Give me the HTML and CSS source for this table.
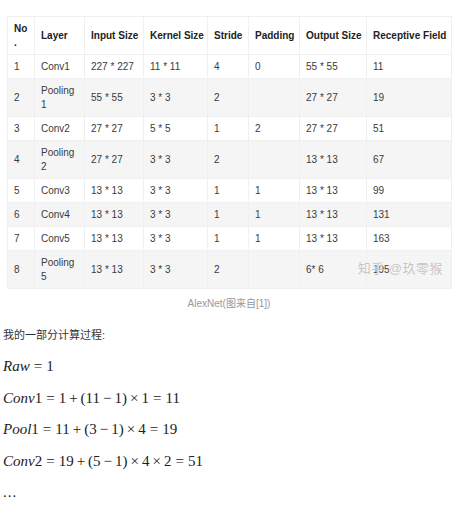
FILE: index.html
```html
<!DOCTYPE html>
<html lang="zh">
<head>
<meta charset="utf-8">
<link rel="stylesheet" href="styles.css">
</head>
<body>
<div class="figure">
  <table class="grid">
    <colgroup>
      <col class="c1"><col class="c2"><col class="c3"><col class="c4"><col class="c5"><col class="c6"><col class="c7"><col class="c8">
    </colgroup>
    <thead>
      <tr><th>No<br>.</th><th>Layer</th><th>Input Size</th><th>Kernel Size</th><th>Stride</th><th>Padding</th><th>Output Size</th><th>Receptive Field</th></tr>
    </thead>
    <tbody>
      <tr><td>1</td><td>Conv1</td><td>227 * 227</td><td>11 * 11</td><td>4</td><td>0</td><td>55 * 55</td><td>11</td></tr>
      <tr><td>2</td><td>Pooling 1</td><td>55 * 55</td><td>3 * 3</td><td>2</td><td></td><td>27 * 27</td><td>19</td></tr>
      <tr><td>3</td><td>Conv2</td><td>27 * 27</td><td>5 * 5</td><td>1</td><td>2</td><td>27 * 27</td><td>51</td></tr>
      <tr><td>4</td><td>Pooling 2</td><td>27 * 27</td><td>3 * 3</td><td>2</td><td></td><td>13 * 13</td><td>67</td></tr>
      <tr><td>5</td><td>Conv3</td><td>13 * 13</td><td>3 * 3</td><td>1</td><td>1</td><td>13 * 13</td><td>99</td></tr>
      <tr><td>6</td><td>Conv4</td><td>13 * 13</td><td>3 * 3</td><td>1</td><td>1</td><td>13 * 13</td><td>131</td></tr>
      <tr><td>7</td><td>Conv5</td><td>13 * 13</td><td>3 * 3</td><td>1</td><td>1</td><td>13 * 13</td><td>163</td></tr>
      <tr><td>8</td><td>Pooling 5</td><td>13 * 13</td><td>3 * 3</td><td>2</td><td></td><td>6* 6</td><td>195</td></tr>
    </tbody>
  </table>
  <div class="watermark">知乎 @玖零猴</div>
</div>
<p class="caption">AlexNet(图来自[1])</p>
<p class="text">我的一部分计算过程:</p>
<p class="math"><i>Raw</i><span class="rel">=</span>1</p>
<p class="math"><i>Conv</i>1<span class="rel">=</span>1<span class="bin">+</span>(11<span class="bin">−</span>1)<span class="bin">×</span>1<span class="rel">=</span>11</p>
<p class="math"><i>Pool</i>1<span class="rel">=</span>11<span class="bin">+</span>(3<span class="bin">−</span>1)<span class="bin">×</span>4<span class="rel">=</span>19</p>
<p class="math"><i>Conv</i>2<span class="rel">=</span>19<span class="bin">+</span>(5<span class="bin">−</span>1)<span class="bin">×</span>4<span class="bin">×</span>2<span class="rel">=</span>51</p>
<p class="math dots">...</p>
</body>
</html>
```
FILE: styles.css
```css
html, body {
  margin: 0;
  padding: 0;
  background: #fff;
}
body {
  padding: 0 3px;
  font-family: "Liberation Sans", "Noto Sans CJK SC", sans-serif;
  color: #333;
}
.figure {
  position: relative;
  margin: 16px 0 0 4px;
  width: 444px;
}
.grid {
  width: 444px;
  border-collapse: collapse;
  table-layout: fixed;
  font-size: 10px;
  line-height: 14px;
  color: #3a3a3a;
}
.c1 { width: 27px; }
.c2 { width: 50px; }
.c3 { width: 59px; }
.c4 { width: 64px; }
.c5 { width: 41px; }
.c6 { width: 51px; }
.c7 { width: 67px; }
.c8 { width: 85px; }
.grid th, .grid td {
  padding: 5px 6px 4px;
  text-align: left;
  vertical-align: middle;
  border: 1px solid #f0f0f0;
}
.grid th {
  font-weight: bold;
  color: #222;
  white-space: nowrap;
  overflow: visible;
}
.grid tbody tr:nth-child(even) td {
  background: #f5f5f5;
}
.watermark {
  position: absolute;
  right: 8px;
  bottom: 11px;
  font-size: 13px;
  line-height: 18px;
  color: #c4c4c4;
  text-shadow: 0 0 1px #fff, 0 0 1px #fff;
  letter-spacing: 0.5px;
}
.caption {
  margin: 0;
  line-height: 30px;
  text-align: center;
  font-size: 10px;
  color: #999;
  width: 452px;
}
.text {
  margin: 0;
  line-height: 32px;
  font-size: 11px;
  color: #333;
}
.math {
  margin: 0;
  line-height: 31.5px;
  font-family: "Liberation Serif", serif;
  font-size: 15px;
  color: #222;
}
.math i {
  font-style: italic;
}
.rel {
  margin: 0 4px;
}
.bin {
  margin: 0 3px;
}
.dots {
  letter-spacing: 1px;
}
```
